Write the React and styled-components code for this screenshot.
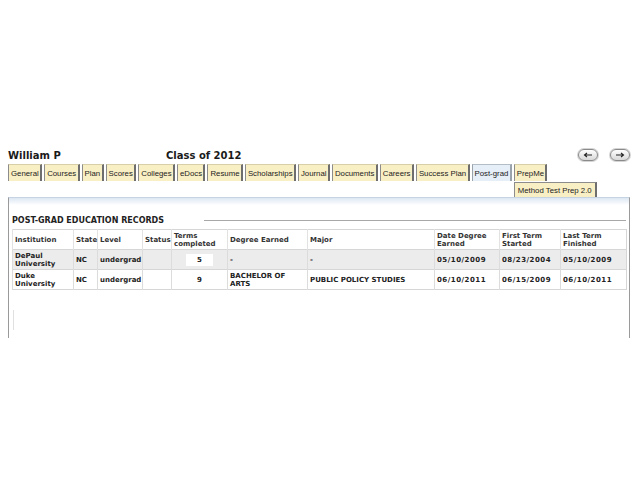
import React from "react";
import styled, { createGlobalStyle } from "styled-components";

const GlobalStyle = createGlobalStyle`
  body {
    margin: 0;
    background: #fff;
    font-family: "DejaVu Sans", Verdana, sans-serif;
  }
`;

const Page = styled.div`
  padding: 148px 8px 0 8px;
  width: 638px;
  box-sizing: border-box;
`;

const HeaderRow = styled.div`
  display: flex;
  align-items: center;
  height: 14px;
`;

const Name = styled.div`
  width: 158px;
  font-size: 10px;
  font-weight: bold;
  color: #1a1a1a;
`;

const ClassYear = styled.div`
  font-size: 10px;
  font-weight: bold;
  color: #1a1a1a;
  flex: 1;
`;

const Arrows = styled.div`
  display: flex;
  gap: 12px;
`;

const ArrowButton = styled.div`
  width: 18px;
  height: 10px;
  border: 1px solid #8a8a8a;
  border-radius: 6px;
  background: linear-gradient(#ffffff, #d8d8d8);
  display: flex;
  align-items: center;
  justify-content: center;
  box-shadow: 0 0 0 1px #d4d4d4;
`;

const TabBar = styled.div`
  display: flex;
  align-items: flex-start;
  gap: 2px;
  margin-top: 2px;
`;

const Tab = styled.div`
  height: 17px;
  box-sizing: border-box;
  padding: 0 1.4px 0 2px;
  display: flex;
  align-items: center;
  font-family: "Liberation Sans", Arial, sans-serif;
  font-size: 7.8px;
  color: #222;
  background: ${(p) => (p.active ? "#e6eef7" : "#f9efc4")};
  border: 1px solid ${(p) => (p.active ? "#b4bcc6" : "#d6cfa8")};
  border-left: 1px solid ${(p) => (p.active ? "#9aa2ac" : "#8c8c8c")};
  border-right: 2px solid ${(p) => (p.active ? "#9aa2ac" : "#6e6e6e")};
  border-bottom: none;
  white-space: nowrap;
`;

const TabGroup = styled.div`
  display: flex;
  flex-direction: column;
  align-items: flex-start;
`;

const SubMenu = styled.div`
  margin-top: 1px;
  height: 15px;
  box-sizing: border-box;
  padding: 0 3px;
  display: flex;
  align-items: center;
  font-family: "Liberation Sans", Arial, sans-serif;
  font-size: 7.8px;
  color: #222;
  background: #f9efc4;
  border: 1px solid #8c8c8c;
  border-right: 2px solid #6e6e6e;
  border-bottom: none;
  white-space: nowrap;
`;

const Panel = styled.div`
  width: 622px;
  height: 141px;
  box-sizing: border-box;
  border-left: 1px solid #9a9a9a;
  border-right: 1px solid #9a9a9a;
  border-top: 1px solid #c5d3e2;
  background: linear-gradient(#dce7f3, #ffffff 7px);
  padding: 17px 3px 0 3px;
`;

const SectionHeader = styled.div`
  display: flex;
  align-items: center;
  height: 10px;
`;

const SectionTitle = styled.div`
  font-size: 8px;
  font-weight: bold;
  color: #222;
  white-space: nowrap;
`;

const SectionRule = styled.div`
  flex: 1;
  height: 1px;
  background: #a8a8a8;
  margin-left: 40px;
`;

const Table = styled.table`
  margin-top: 4px;
  border-collapse: collapse;
  table-layout: fixed;
  width: 614px;
  border: 1px solid #d6d6d6;
`;

const Th = styled.th`
  height: 19px;
  padding: 0 2px;
  font-size: 7px;
  font-weight: bold;
  color: #333;
  text-align: left;
  vertical-align: middle;
  line-height: 8px;
  border-left: 1px solid #e2e2e2;
  background: #fff;
`;

const Tr = styled.tr`
  background: ${(p) => (p.shaded ? "#ececec" : "#ffffff")};
  border-top: 1px solid #d6d6d6;
`;

const Td = styled.td`
  height: 19px;
  padding: 0 2px;
  font-size: 7px;
  font-weight: bold;
  color: #222;
  line-height: 8px;
  vertical-align: middle;
  text-align: ${(p) => (p.center ? "center" : "left")};
  letter-spacing: ${(p) => (p.date ? "0.5px" : "0")};
  border-left: 1px solid #dcdcdc;
`;

const NumBox = styled.span`
  display: inline-block;
  width: 27px;
  height: 12px;
  line-height: 12px;
  background: #fff;
  text-align: center;
`;

const NoteBox = styled.div`
  margin-top: 20px;
  margin-left: 1px;
  width: 1px;
  height: 20px;
  border-left: 1px solid #e0e0e0;
`;

const tabs = [
  "General",
  "Courses",
  "Plan",
  "Scores",
  "Colleges",
  "eDocs",
  "Resume",
  "Scholarships",
  "Journal",
  "Documents",
  "Careers",
  "Success Plan",
  "Post-grad",
];

const columns = [
  ["Institution", 61],
  ["State", 24],
  ["Level", 45],
  ["Status", 29],
  ["Terms completed", 56],
  ["Degree Earned", 80],
  ["Major", 127],
  ["Date Degree Earned", 65],
  ["First Term Started", 61],
  ["Last Term Finished", 66],
];

const records = [
  {
    institution: "DePaul University",
    state: "NC",
    level: "undergrad",
    status: "",
    terms: "5",
    boxed: true,
    degree: "-",
    major: "-",
    earned: "05/10/2009",
    started: "08/23/2004",
    finished: "05/10/2009",
  },
  {
    institution: "Duke University",
    state: "NC",
    level: "undergrad",
    status: "",
    terms: "9",
    boxed: false,
    degree: "BACHELOR OF ARTS",
    major: "PUBLIC POLICY STUDIES",
    earned: "06/10/2011",
    started: "06/15/2009",
    finished: "06/10/2011",
  },
];

function Arrow({ dir }) {
  return (
    <svg width="10" height="6" viewBox="0 0 10 6">
      {dir === "left" ? (
        <path d="M9 3H2M4 1L1.5 3L4 5" stroke="#222" strokeWidth="1.1" fill="none" />
      ) : (
        <path d="M1 3H8M6 1L8.5 3L6 5" stroke="#222" strokeWidth="1.1" fill="none" />
      )}
    </svg>
  );
}

function App() {
  return (
    <>
      <GlobalStyle />
      <Page>
        <HeaderRow>
          <Name>William P</Name>
          <ClassYear>Class of 2012</ClassYear>
          <Arrows>
            <ArrowButton>
              <Arrow dir="left" />
            </ArrowButton>
            <ArrowButton>
              <Arrow dir="right" />
            </ArrowButton>
          </Arrows>
        </HeaderRow>

        <TabBar>
          {tabs.map((t) => (
            <Tab key={t} active={t === "Post-grad"}>
              {t}
            </Tab>
          ))}
          <TabGroup>
            <Tab>PrepMe</Tab>
            <SubMenu>Method Test Prep 2.0</SubMenu>
          </TabGroup>
        </TabBar>

        <Panel>
          <SectionHeader>
            <SectionTitle>POST-GRAD EDUCATION RECORDS</SectionTitle>
            <SectionRule />
          </SectionHeader>
          <Table>
            <colgroup>
              {columns.map(([c, w]) => (
                <col key={c} style={{ width: w }} />
              ))}
            </colgroup>
            <thead>
              <tr>
                {columns.map(([c]) => (
                  <Th key={c}>{c}</Th>
                ))}
              </tr>
            </thead>
            <tbody>
              {records.map((r, i) => (
                <Tr key={r.institution} shaded={i === 0}>
                  <Td>{r.institution}</Td>
                  <Td>{r.state}</Td>
                  <Td>{r.level}</Td>
                  <Td>{r.status}</Td>
                  <Td center>{r.boxed ? <NumBox>{r.terms}</NumBox> : r.terms}</Td>
                  <Td>{r.degree}</Td>
                  <Td>{r.major}</Td>
                  <Td date>{r.earned}</Td>
                  <Td date>{r.started}</Td>
                  <Td date>{r.finished}</Td>
                </Tr>
              ))}
            </tbody>
          </Table>
          <NoteBox />
        </Panel>
      </Page>
    </>
  );
}

export default App;
